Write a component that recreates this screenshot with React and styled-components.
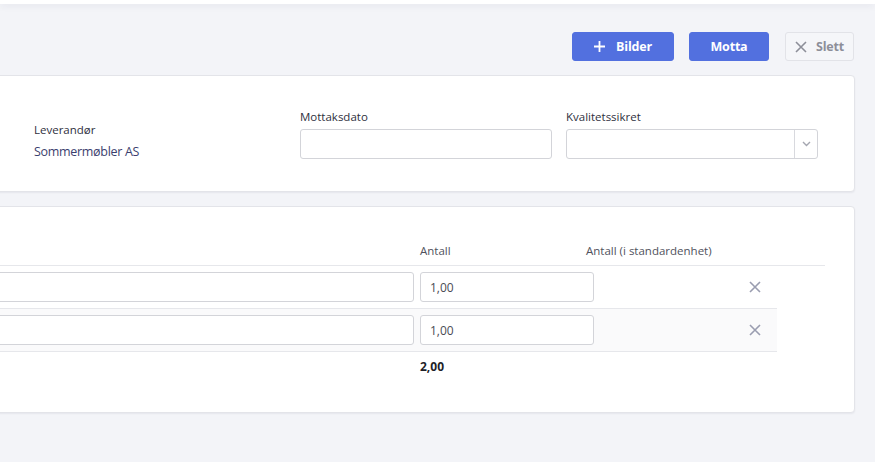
import React from "react";
import styled, { createGlobalStyle } from "styled-components";

const GlobalStyle = createGlobalStyle`
  html, body {
    margin: 0;
    padding: 0;
    background: #f3f4f8;
    font-family: "Open Sans", "Noto Sans", sans-serif;
    overflow: hidden;
  }
`;

const Page = styled.div`
  width: 875px;
  height: 462px;
  background: #f3f4f8;
  overflow: hidden;
`;

const TopBar = styled.div`
  height: 4px;
  background: #ffffff;
  box-shadow: 0 2px 7px rgba(30, 35, 60, 0.07);
`;

const Main = styled.div`
  display: flex;
  flex-direction: column;
  gap: 14px;
  margin-left: -40px;
  padding: 28px 20px 0 0;
`;

const Toolbar = styled.div`
  display: flex;
  justify-content: flex-end;
  gap: 15px;
  padding-right: 1px;
`;

const Button = styled.button`
  box-sizing: border-box;
  width: ${(p) => p.$w}px;
  height: 29px;
  display: inline-flex;
  align-items: center;
  justify-content: center;
  gap: ${(p) => p.$gap || 9}px;
  padding: 0;
  margin-left: ${(p) => p.$ml || 0}px;
  border-radius: 3px;
  font-family: inherit;
  font-size: 12.5px;
  letter-spacing: -0.2px;
  font-weight: 700;
  cursor: pointer;
  border: 1px solid ${(p) => (p.$ghost ? "#e2e3e8" : "#5270df")};
  background: ${(p) => (p.$ghost ? "#f5f6f9" : "#5270df")};
  color: ${(p) => (p.$ghost ? "#8d8f99" : "#ffffff")};
`;

const Card = styled.div`
  background: #ffffff;
  border: 1px solid #e3e4e9;
  border-radius: 4px;
  box-shadow: 0 1px 2px rgba(20, 25, 50, 0.06);
`;

const InfoGrid = styled.div`
  display: grid;
  grid-template-columns: repeat(3, 252px);
  justify-content: end;
  column-gap: 14px;
  align-items: end;
  padding: 34px 36px 32px 0;
`;

const Field = styled.div`
  display: flex;
  flex-direction: column;
  gap: ${(p) => p.$gap || 5}px;
`;

const Label = styled.label`
  font-size: 11.5px;
  color: #2f3040;
  line-height: 14px;
`;

const Value = styled.div`
  font-size: 12.5px;
  letter-spacing: -0.3px;
  color: #3b3e6e;
  line-height: 18px;
  margin-bottom: -2px;
`;

const Input = styled.input`
  box-sizing: border-box;
  width: 100%;
  height: 30px;
  border: 1px solid #d3d4d9;
  border-radius: 3px;
  padding: 0 9px;
  font-family: inherit;
  font-size: 12px;
  color: #4a4b55;
  background: #ffffff;
  outline: none;
`;

const Select = styled.div`
  box-sizing: border-box;
  height: 30px;
  border: 1px solid #d3d4d9;
  border-radius: 3px;
  display: flex;
  justify-content: flex-end;
  background: #ffffff;
`;

const Caret = styled.div`
  width: 22px;
  border-left: 1px solid #d8d9de;
  display: flex;
  align-items: center;
  justify-content: center;
`;

const TableWrap = styled.div`
  padding: 37px 0 37px 0;
`;

const HeadRow = styled.div`
  display: grid;
  grid-template-columns: minmax(0, 1fr) 166px 239px;
  margin-right: 29px;
  border-bottom: 1px solid #e6e7eb;
  padding-bottom: 7px;
`;

const HeadCell = styled.div`
  font-size: 11.5px;
  line-height: 14px;
  color: #50525d;
`;

const Body = styled.div`
  margin-right: 77px;
`;

const Row = styled.div`
  display: grid;
  grid-template-columns: minmax(0, 1fr) 174px 127px 44px;
  column-gap: 6px;
  align-items: center;
  height: 42px;
  border-bottom: 1px solid #e6e7eb;
  background: ${(p) => (p.$alt ? "#fafafb" : "#ffffff")};
`;

const RemoveCell = styled.div`
  display: flex;
  justify-content: center;
  padding-right: 1px;
`;

const TotalRow = styled.div`
  display: grid;
  grid-template-columns: minmax(0, 1fr) 174px 177px;
  column-gap: 6px;
  padding-top: 7px;
  margin-right: 77px;
`;

const Total = styled.div`
  font-size: 12px;
  font-weight: 700;
  line-height: 16px;
  color: #1e1f28;
`;

const XIcon = ({ size = 12, color = "#9a9db0", width = 1.6 }) => (
  <svg width={size} height={size} viewBox="0 0 12 12">
    <path d="M1 1 L11 11 M11 1 L1 11" stroke={color} strokeWidth={width} fill="none" />
  </svg>
);

const PlusIcon = () => (
  <svg width="11" height="11" viewBox="0 0 11 11">
    <path d="M5.5 0 V11 M0 5.5 H11" stroke="#ffffff" strokeWidth="1.8" fill="none" />
  </svg>
);

const Chevron = () => (
  <svg width="9" height="6" viewBox="0 0 9 6">
    <path d="M1 1 L4.5 4.5 L8 1" stroke="#a4a6b0" strokeWidth="1.4" fill="none" />
  </svg>
);

const lines = [
  { id: 1, antall: "1,00" },
  { id: 2, antall: "1,00" },
];

export default function App() {
  return (
    <Page>
      <GlobalStyle />
      <TopBar />
      <Main>
        <Toolbar>
          <Button $w={102} $gap={11}>
            <PlusIcon />
            Bilder
          </Button>
          <Button $w={80}>Motta</Button>
          <Button $ghost $w={69} $ml={1}>
            <XIcon size={12} color="#8d8f99" width={1.6} />
            Slett
          </Button>
        </Toolbar>

        <Card>
          <InfoGrid>
            <Field $gap={6}>
              <Label>Leverandør</Label>
              <Value>Sommermøbler AS</Value>
            </Field>
            <Field>
              <Label>Mottaksdato</Label>
              <Input type="text" />
            </Field>
            <Field>
              <Label>Kvalitetssikret</Label>
              <Select>
                <Caret>
                  <Chevron />
                </Caret>
              </Select>
            </Field>
          </InfoGrid>
        </Card>

        <Card>
          <TableWrap>
            <HeadRow>
              <HeadCell />
              <HeadCell>Antall</HeadCell>
              <HeadCell>Antall (i standardenhet)</HeadCell>
            </HeadRow>
            <Body>
              {lines.map((line, i) => (
                <Row key={line.id} $alt={i % 2 === 1}>
                  <Input type="text" />
                  <Input type="text" defaultValue={line.antall} />
                  <div />
                  <RemoveCell>
                    <XIcon />
                  </RemoveCell>
                </Row>
              ))}
            </Body>
            <TotalRow>
              <div />
              <Total>2,00</Total>
              <div />
            </TotalRow>
          </TableWrap>
        </Card>
      </Main>
    </Page>
  );
}
